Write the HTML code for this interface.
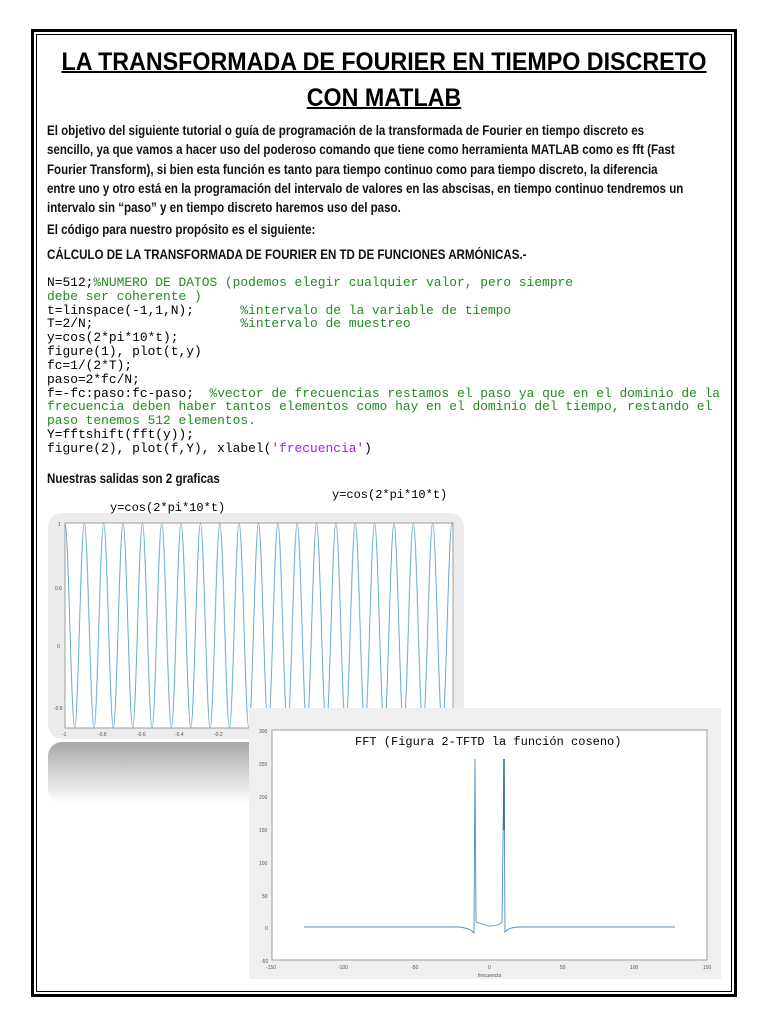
<!DOCTYPE html>
<html><head><meta charset="utf-8">
<style>
body{margin:0;width:768px;height:1024px;background:#fff;position:relative;overflow:hidden;font-family:"Liberation Sans",sans-serif;}
svg{z-index:0}
.b1{position:absolute;left:31px;top:29px;width:700px;height:962px;border:3px solid #000;}
.b2{position:absolute;left:36px;top:34px;width:694px;height:956px;border:1px solid #000;}
.t{position:absolute;left:0;width:768px;text-align:center;font-weight:bold;font-size:25px;text-decoration:underline;text-decoration-thickness:2px;color:#000;transform:scaleX(0.93);transform-origin:384px 0;z-index:2}
.p{position:absolute;left:47px;font-weight:bold;font-size:13.6px;white-space:nowrap;color:#111;transform:scaleX(0.85);transform-origin:0 0;z-index:2}
.c{position:absolute;left:47px;font-family:"Liberation Mono",monospace;font-size:12.9px;white-space:pre;line-height:13.83px;color:#000;z-index:2}
.g{color:#228b22}.m{color:#a020f0}
.lbl{position:absolute;font-family:"Liberation Mono",monospace;font-size:12px;white-space:nowrap;z-index:2}
</style></head><body>
<div class="b1"></div><div class="b2"></div>
<div class="t" style="top:48px">LA TRANSFORMADA DE FOURIER EN TIEMPO DISCRETO</div>
<div class="t" style="top:84px">CON MATLAB</div>
<div class="p" style="top:123px">El objetivo del siguiente tutorial o guía de programación de la transformada de Fourier en tiempo discreto es</div>
<div class="p" style="top:142px">sencillo, ya que vamos a hacer uso del poderoso comando que tiene como herramienta MATLAB como es fft (Fast</div>
<div class="p" style="top:162px">Fourier Transform), si bien esta función es tanto para tiempo continuo como para tiempo discreto, la diferencia</div>
<div class="p" style="top:181px">entre uno y otro está en la programación del intervalo de valores en las abscisas, en tiempo continuo tendremos un</div>
<div class="p" style="top:200px">intervalo sin “paso” y en tiempo discreto haremos uso del paso.</div>
<div class="p" style="top:222px">El código para nuestro propósito es el siguiente:</div>
<div class="p" style="top:247px">CÁLCULO DE LA TRANSFORMADA DE FOURIER EN TD DE FUNCIONES ARMÓNICAS.-</div>
<div class="c" style="top:276px">N=512;<span class="g">%NUMERO DE DATOS (podemos elegir cualquier valor, pero siempre
debe ser coherente )</span>
t=linspace(-1,1,N);      <span class="g">%intervalo de la variable de tiempo</span>
T=2/N;                   <span class="g">%intervalo de muestreo</span>
y=cos(2*pi*10*t);
figure(1), plot(t,y)
fc=1/(2*T);
paso=2*fc/N;
f=-fc:paso:fc-paso;  <span class="g">%vector de frecuencias restamos el paso ya que en el dominio de la
frecuencia deben haber tantos elementos como hay en el dominio del tiempo, restando el
paso tenemos 512 elementos.</span>
Y=fftshift(fft(y));
figure(2), plot(f,Y), xlabel(<span class="m">'frecuencia'</span>)</div>
<div class="p" style="top:471px">Nuestras salidas son 2 graficas</div>
<div class="lbl" style="left:332px;top:488px">y=cos(2*pi*10*t)</div>
<div class="lbl" style="left:110px;top:501px">y=cos(2*pi*10*t)</div>
<svg style="position:absolute;left:0;top:0" width="768" height="1024">
<defs>
<linearGradient id="rg" x1="0" y1="0" x2="0" y2="1"><stop offset="0" stop-color="#a8a8a8"/><stop offset="1" stop-color="#fff"/></linearGradient>
<pattern id="cp" x="65" y="523" width="19.35" height="205" patternUnits="userSpaceOnUse">
<path d="M0,0 C3.5,0 6.2,205 9.675,205 C13.1,205 15.85,0 19.35,0" fill="none" stroke="#5a9fd0" stroke-width="0.9"/>
</pattern>
</defs>
<rect x="48" y="513" width="416" height="226" rx="14" fill="#ececec"/>
<rect x="48" y="742" width="230" height="62" rx="14" fill="url(#rg)"/>
<rect x="65" y="523" width="388" height="205" fill="#fff" stroke="#888" stroke-width="0.8"/>
<rect x="65" y="523" width="388" height="205" fill="url(#cp)"/>
<g font-family="Liberation Sans" font-size="5" fill="#555">
<text x="58" y="526">1</text><text x="55" y="590">0.6</text><text x="57" y="648">0</text><text x="54" y="710">-0.8</text>
<text x="62" y="736">-1</text><text x="98" y="736">-0.8</text><text x="137" y="736">-0.6</text><text x="175" y="736">-0.4</text><text x="214" y="736">-0.2</text>
</g>
<rect x="249" y="708" width="472" height="271" fill="#efefef"/>
<rect x="272" y="730" width="435" height="230" fill="#fff" stroke="#888" stroke-width="0.8"/>
<g font-family="Liberation Sans" font-size="5" fill="#555">
<text x="259" y="733">300</text><text x="259" y="766">250</text><text x="259" y="799">200</text><text x="259" y="832">150</text><text x="259" y="865">100</text><text x="262" y="898">50</text><text x="265" y="930">0</text><text x="261" y="963">-50</text>
<text x="266" y="969">-150</text><text x="338" y="969">-100</text><text x="411" y="969">-50</text><text x="488" y="969">0</text><text x="560" y="969">50</text><text x="630" y="969">100</text><text x="703" y="969">150</text>
<text x="478" y="977">frecuencia</text>
</g>
<path d="M304,927 L460,927 C466,928 470,929 472,931 L474,933 L475,759 L476,922 C480,923 486,926 490,926 C494,926 500,925 502,922 L504,759 L505,932 L507,930 C510,928 514,927 520,927 L675,927" fill="none" stroke="#4a8fc0" stroke-width="0.9"/>
<line x1="504" y1="759" x2="504" y2="830" stroke="#2c6e99" stroke-width="1.6"/>
<text x="355" y="745" font-family="Liberation Mono" font-size="12">FFT (Figura 2-TFTD la función coseno)</text>
</svg>
</body></html>
